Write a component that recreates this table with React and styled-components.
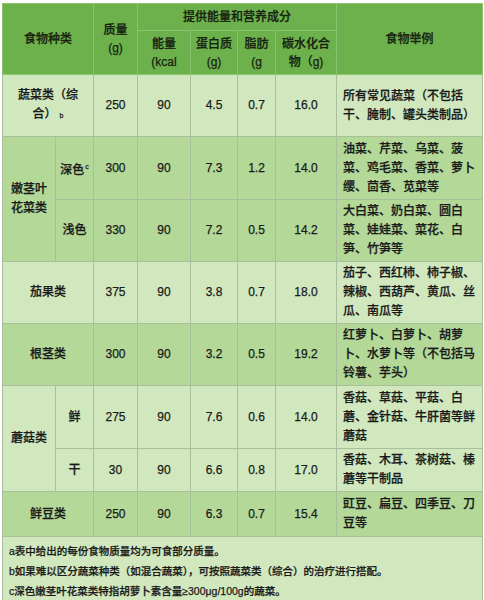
import React from 'react'
import styled, { createGlobalStyle } from 'styled-components';

const GlobalStyle = createGlobalStyle`
  html, body {
    margin: 0;
    padding: 0;
    background: #fff;
  }
  body {
    font-family: "Liberation Sans", "Noto Sans CJK SC", sans-serif;
    color: #1a1a1a;
  }
`;

const Page = styled.div`
  padding: 3px 2px 2px 2px;
`;

const Table = styled.table`
  width: 480px;
  border-collapse: collapse;
  table-layout: fixed;
  border: 1px solid #c4cfbd;
  font-size: 12px;
  -webkit-text-stroke: 0.25px currentColor;
`;

const Col = styled.col`
  width: ${p => p.$w}px;
`;

const HeadRow = styled.tr`
  height: ${p => p.$h}px;
`;

const HeadCell = styled.th`
  background: #6cb14c;
  border: 1px solid #8cc36f;
  font-weight: 500;
  line-height: 18px;
  text-align: center;
  vertical-align: middle;
  padding: 0 2px;
  white-space: nowrap;
  overflow: hidden;
  color: #17220f;
`;

const Row = styled.tr`
  height: ${p => p.$h}px;
`;

const Cell = styled.td`
  background: ${p => (p.$tone === 'dark' ? '#b3d897' : '#d1e8be')};
  border: 1px solid #a9bf9c;
  font-weight: 500;
  line-height: 19px;
  text-align: ${p => p.$align || 'center'};
  padding: ${p => (p.$align === 'left' ? '0 4px 0 6px' : '0 2px')};
  vertical-align: middle;
  white-space: nowrap;
`;

const Mark = styled.sup`
  font-size: 7px;
  vertical-align: ${p => (p.$low ? 'middle' : 'super')};
  margin-left: ${p => (p.$low ? 3 : 1)}px;
`;

const NoteCell = styled.td`
  background: #d1e8be;
  border: 1px solid #a9bf9c;
  padding: 4px 6px 2px 6px;
  font-size: 10.5px;
  line-height: 20px;
  font-weight: 500;
`;

const Lines = ({ lines }) =>
  lines.map((l, i) => (
    <React.Fragment key={i}>
      {i > 0 && <br />}
      {l}
    </React.Fragment>
  ));

const Nums = ({ tone, values }) =>
  values.map((v, i) => (
    <Cell key={i} $tone={tone}>{v}</Cell>
  ));

export default function App() {
  return (
    <Page>
      <GlobalStyle />
      <Table>
        <colgroup>
          <Col $w={53} />
          <Col $w={38} />
          <Col $w={44} />
          <Col $w={53} />
          <Col $w={47} />
          <Col $w={38} />
          <Col $w={61} />
          <Col $w={146} />
        </colgroup>
        <thead>
          <HeadRow $h={27}>
            <HeadCell colSpan={2} rowSpan={2}>食物种类</HeadCell>
            <HeadCell rowSpan={2}>质量<br />(g)</HeadCell>
            <HeadCell colSpan={4}>提供能量和营养成分</HeadCell>
            <HeadCell rowSpan={2}>食物举例</HeadCell>
          </HeadRow>
          <HeadRow $h={44}>
            <HeadCell>能量<br />(kcal</HeadCell>
            <HeadCell>蛋白质<br />(g)</HeadCell>
            <HeadCell>脂肪<br />(g</HeadCell>
            <HeadCell>碳水化合<br />物（g)</HeadCell>
          </HeadRow>
        </thead>
        <tbody>
          <Row $h={62}>
            <Cell colSpan={2}>蔬菜类（综<br />合）<Mark $low>b</Mark></Cell>
            <Nums values={['250', '90', '4.5', '0.7', '16.0']} />
            <Cell $align="left">
              <Lines lines={['所有常见蔬菜（不包括', '干、腌制、罐头类制品）']} />
            </Cell>
          </Row>

          <Row $h={63}>
            <Cell $tone="dark" rowSpan={2}>嫩茎叶<br />花菜类</Cell>
            <Cell $tone="dark">深色<Mark>c</Mark></Cell>
            <Nums tone="dark" values={['300', '90', '7.3', '1.2', '14.0']} />
            <Cell $tone="dark" $align="left">
              <Lines lines={['油菜、芹菜、乌菜、菠', '菜、鸡毛菜、香菜、萝卜', '缨、茴香、苋菜等']} />
            </Cell>
          </Row>
          <Row $h={62}>
            <Cell $tone="dark">浅色</Cell>
            <Nums tone="dark" values={['330', '90', '7.2', '0.5', '14.2']} />
            <Cell $tone="dark" $align="left">
              <Lines lines={['大白菜、奶白菜、圆白', '菜、娃娃菜、菜花、白', '笋、竹笋等']} />
            </Cell>
          </Row>

          <Row $h={62}>
            <Cell colSpan={2}>茄果类</Cell>
            <Nums values={['375', '90', '3.8', '0.7', '18.0']} />
            <Cell $align="left">
              <Lines lines={['茄子、西红柿、柿子椒、', '辣椒、西葫芦、黄瓜、丝', '瓜、南瓜等']} />
            </Cell>
          </Row>

          <Row $h={62}>
            <Cell $tone="dark" colSpan={2}>根茎类</Cell>
            <Nums tone="dark" values={['300', '90', '3.2', '0.5', '19.2']} />
            <Cell $tone="dark" $align="left">
              <Lines lines={['红萝卜、白萝卜、胡萝', '卜、水萝卜等（不包括马', '铃薯、芋头）']} />
            </Cell>
          </Row>

          <Row $h={63}>
            <Cell rowSpan={2}>蘑菇类</Cell>
            <Cell>鲜</Cell>
            <Nums values={['275', '90', '7.6', '0.6', '14.0']} />
            <Cell $align="left">
              <Lines lines={['香菇、草菇、平菇、白', '蘑、金针菇、牛肝菌等鲜', '蘑菇']} />
            </Cell>
          </Row>
          <Row $h={43}>
            <Cell>干</Cell>
            <Nums values={['30', '90', '6.6', '0.8', '17.0']} />
            <Cell $align="left">
              <Lines lines={['香菇、木耳、茶树菇、榛', '蘑等干制品']} />
            </Cell>
          </Row>

          <Row $h={45}>
            <Cell $tone="dark" colSpan={2}>鲜豆类</Cell>
            <Nums tone="dark" values={['250', '90', '6.3', '0.7', '15.4']} />
            <Cell $tone="dark" $align="left">
              <Lines lines={['豇豆、扁豆、四季豆、刀', '豆等']} />
            </Cell>
          </Row>

          <tr>
            <NoteCell colSpan={8}>
              a表中给出的每份食物质量均为可食部分质量。<br />
              b如果难以区分蔬菜种类（如混合蔬菜），可按照蔬菜类（综合）的治疗进行搭配。<br />
              c深色嫩茎叶花菜类特指胡萝卜素含量≥300μg/100g的蔬菜。
            </NoteCell>
          </tr>
        </tbody>
      </Table>
    </Page>
  );
}
